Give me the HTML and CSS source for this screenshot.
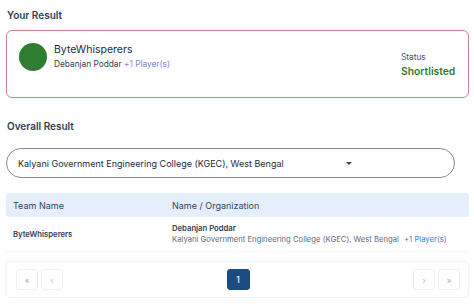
FILE: index.html
```html
<!DOCTYPE html>
<html>
<head>
<meta charset="utf-8">
<link rel="stylesheet" href="styles.css">
</head>
<body>
<div class="page">
  <h2 class="heading">Your Result</h2>
  <div class="result-card">
    <div class="team">
      <div class="avatar"></div>
      <div class="team-info">
        <div class="team-name">ByteWhisperers</div>
        <div class="team-sub">Debanjan Poddar <span class="players">+1 Player(s)</span></div>
      </div>
    </div>
    <div class="status">
      <div class="status-label">Status</div>
      <div class="status-value">Shortlisted</div>
    </div>
  </div>

  <h2 class="heading heading-overall">Overall Result</h2>
  <div class="select">
    <span class="select-text">Kalyani Government Engineering College (KGEC), West Bengal</span>
    <span class="caret"></span>
  </div>

  <div class="table">
    <div class="thead">
      <div class="col1">Team Name</div>
      <div class="col2">Name / Organization</div>
    </div>
    <div class="trow">
      <div class="col1 row-team">ByteWhisperers</div>
      <div class="col2 row-org">
        <div class="row-name">Debanjan Poddar</div>
        <div class="row-line"><span class="row-college">Kalyani Government Engineering College (KGEC), West Bengal</span><span class="row-players">+1 Player(s)</span></div>
      </div>
    </div>
  </div>

  <div class="pager">
    <div class="pgroup">
      <div class="pbtn">«</div>
      <div class="pbtn">‹</div>
    </div>
    <div class="pbtn active">1</div>
    <div class="pgroup">
      <div class="pbtn">›</div>
      <div class="pbtn">»</div>
    </div>
  </div>
</div>
</body>
</html>
```

FILE: styles.css
```css
* { box-sizing: border-box; }
html, body { margin: 0; padding: 0; background: #fff; }
body { font-family: Inter, "Noto Sans", sans-serif; color: #1f2a3c; }
.page { padding: 7px 6px 0 6px; width: 474px; }
.heading {
  margin: 0 0 0 1px;
  font-size: 10px;
  font-weight: 600;
  color: #2f3d58;
  line-height: 16px;
}
.result-card {
  margin-top: 7px;
  width: 463px;
  height: 68px;
  border: 1.5px solid #c98583;
  border-radius: 6px;
  display: flex;
  justify-content: space-between;
  align-items: center;
  padding: 0 12px;
}
.team { display: flex; align-items: flex-start; gap: 7px; align-self: flex-start; margin-top: 11.5px; }
.avatar { width: 28px; height: 28px; border-radius: 50%; background: #2f7d33; }
.team-name { font-size: 10.5px; color: #1e2a3a; line-height: 14px; }
.team-sub { font-size: 8.3px; color: #2f3d58; line-height: 12px; margin-top: 1px; }
.players { color: #7d86d4; }
.status { width: 55px; padding-top: 1px; }
.status-label { font-size: 8.3px; color: #4a5568; line-height: 12px; }
.status-value { font-size: 10.3px; font-weight: 600; color: #2f7d33; line-height: 14px; margin-top: 1px; }
.heading-overall { margin-top: 20px; }
.select {
  margin-top: 14px;
  width: 449px;
  height: 30px;
  border: 1px solid #8a8a8a;
  border-radius: 15px;
  display: flex;
  align-items: center;
  padding-left: 11px;
  font-size: 9px;
  color: #1e2a3a;
}
.select-text { width: 328px; white-space: nowrap; }
.caret {
  width: 0; height: 0;
  border-left: 3px solid transparent;
  border-right: 3px solid transparent;
  border-top: 3.5px solid #3a4556;
}
.table { margin-top: 15px; width: 463px; }
.thead {
  display: flex;
  align-items: center;
  height: 24px;
  background: #e4effb;
  border-radius: 3px;
  font-size: 9px;
  color: #34435c;
}
.col1 { width: 166px; padding-left: 7px; }
.col2 { flex: 1; }
.trow {
  display: flex;
  align-items: center;
  height: 35px;
  border-bottom: 1px solid #f0f3f7;
}
.row-team { font-size: 7.7px; font-weight: 600; color: #2f3d58; }
.row-name { font-size: 7.7px; font-weight: 600; color: #2f3d58; line-height: 11px; }
.row-line { font-size: 7.7px; line-height: 11px; color: #5f6b7a; white-space: nowrap; }
.row-college { display: inline-block; width: 232px; }
.row-players { color: #3b7fc5; }
.pager {
  margin-top: 9px;
  width: 463px;
  height: 37px;
  border: 1px solid #f1f3f6;
  border-radius: 5px;
  box-shadow: 0 1px 3px rgba(0,0,0,0.04);
  display: flex;
  align-items: center;
  justify-content: space-between;
  padding: 0 8px 0 9px;
}
.pgroup { display: flex; gap: 3px; }
.pbtn {
  width: 22px;
  height: 21px;
  border: 1px solid #eceff3;
  border-radius: 3px;
  display: flex;
  align-items: center;
  justify-content: center;
  font-size: 8px;
  color: #a3abb5;
}
.pbtn.active {
  background: #1d4a80;
  border-color: #1d4a80;
  color: #fff;
  font-size: 8.5px;
  font-weight: 500;
  width: 23px;
}
```
